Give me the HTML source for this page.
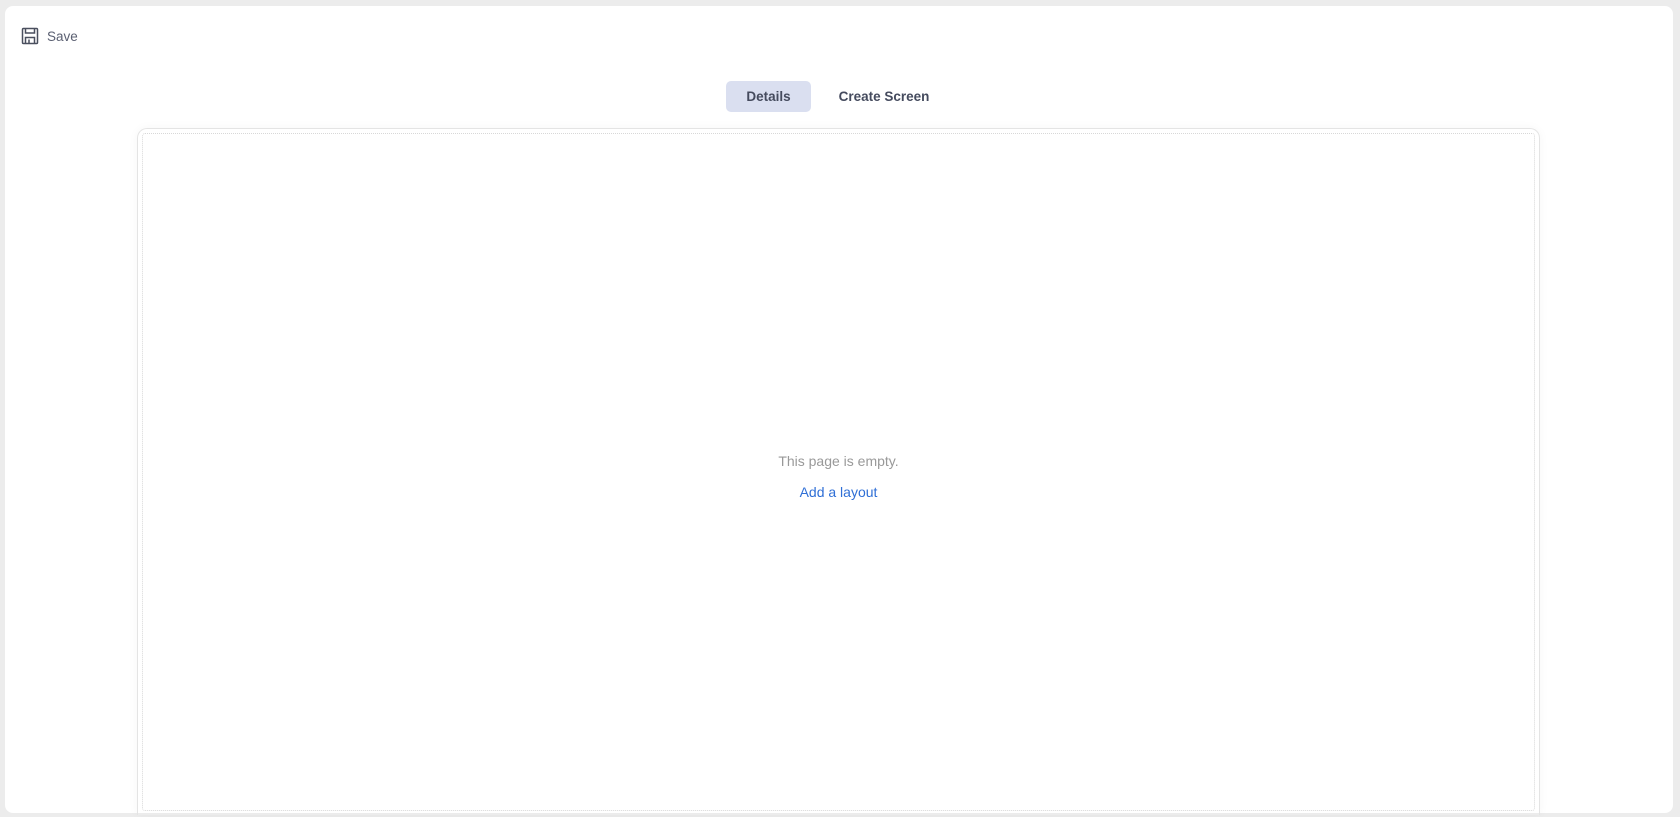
<!DOCTYPE html>
<html><head><style>
html,body{margin:0;padding:0;width:1680px;height:817px;background:#ececec;overflow:hidden;font-family:"Liberation Sans",sans-serif}
.card{position:absolute;left:5px;top:6px;width:1668px;height:807px;background:#fff;border-radius:8px}
.save{position:absolute;display:flex;align-items:center;color:#5b6072;font-size:13.5px}
.save span{margin-left:8px}
.tab{position:absolute;top:75px;height:31px;line-height:31px;font-size:13.5px;font-weight:bold;color:#454b5e;text-align:center;border-radius:5px}
.canvas{position:absolute;width:1401px;height:686px;border:1px solid #e4e4e4;border-bottom:none;border-radius:10px 10px 0 0;box-shadow:0 0 10px rgba(0,0,0,0.04)}
.inner{position:absolute;left:4px;top:4px;right:4px;bottom:4px;border:1px dotted #d8d8d8;border-radius:3px}
.msg{position:absolute;left:0;width:100%;text-align:center;font-size:14px}
</style></head><body>
<div class="card">
<div class="save" style="left:16px;top:21px">
<svg width="18" height="18" viewBox="0 0 18 18" fill="none" stroke="#4a4f5e" stroke-width="1.5"><rect x="1.5" y="1.5" width="15" height="15" rx="1"/><path d="M4.5 1.5v4.5h9V1.5M4.5 16.5v-6h9v6M8 12.5v4"/></svg>
<span>Save</span></div>
<div class="tab" style="left:721px;width:85px;background:#dadff0">Details</div>
<div class="tab" style="left:827px;width:104px">Create Screen</div>
<div class="canvas" style="left:132px;top:122px"><div class="inner"></div>
<div class="msg" style="top:324px;color:#999">This page is empty.</div>
<div class="msg" style="top:355px;color:#2f6fd6">Add a layout</div>
</div>
</div>
</body></html>
